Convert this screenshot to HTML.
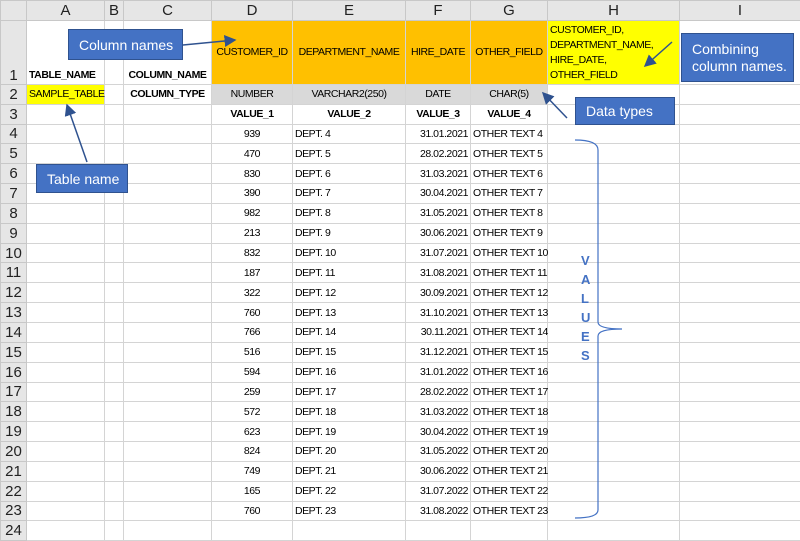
<!DOCTYPE html><html><head><style>
body{margin:0;width:800px;height:528px;overflow:hidden;background:#fff;font-family:"Liberation Sans",Arial,sans-serif;position:relative}
table{border-collapse:collapse;table-layout:fixed;position:absolute;left:0;top:0;width:800px}
td{border:1px solid #d4d4d4;padding:0 2px;font-size:10.5px;white-space:nowrap;overflow:visible;color:#000;letter-spacing:-0.45px}
tr.h td{background:#e6e6e6;text-align:center;font-size:15px;color:#222;border-color:#c8c8c8;letter-spacing:0}
td.r{background:#e6e6e6;text-align:center;font-size:15px;color:#222;border-color:#c8c8c8;padding:0;letter-spacing:0}
tr td{height:18.85px}
.c{text-align:center}.b{font-weight:bold}.o{background:#ffc000;text-align:center;padding:0}.g{background:#d9d9d9;text-align:center}
.rt{text-align:right}
.box{position:absolute;background:#4472c4;border:1px solid #2f528f;color:#fff;font-size:14px;box-sizing:border-box;padding-left:10px;display:flex;align-items:center}
.v{position:absolute;left:581px;color:#4472c4;font-weight:bold;font-size:13px}
</style></head><body>
<table>
<colgroup><col style="width:26px"><col style="width:78px"><col style="width:19px"><col style="width:88px"><col style="width:81px"><col style="width:113px"><col style="width:65px"><col style="width:77px"><col style="width:132px"><col style="width:121px"></colgroup>
<tr class="h"><td style="height:17px"></td><td>A</td><td>B</td><td>C</td><td>D</td><td>E</td><td>F</td><td>G</td><td>H</td><td>I</td></tr>
<tr><td class="r" style="height:63px;vertical-align:bottom">1</td><td class="b" style="vertical-align:bottom;padding-bottom:3px">TABLE_NAME</td><td></td><td class="b c" style="vertical-align:bottom;padding-bottom:3px">COLUMN_NAME</td><td class="o">CUSTOMER_ID</td><td class="o">DEPARTMENT_NAME</td><td class="o">HIRE_DATE</td><td class="o">OTHER_FIELD</td><td style="background:#ffff00;vertical-align:top;padding-top:2px;line-height:15px">CUSTOMER_ID,<br>DEPARTMENT_NAME,<br>HIRE_DATE,<br>OTHER_FIELD</td><td></td></tr>
<tr><td class="r">2</td><td style="background:#ffff00">SAMPLE_TABLE</td><td></td><td class="b c">COLUMN_TYPE</td><td class="g">NUMBER</td><td class="g">VARCHAR2(250)</td><td class="g">DATE</td><td class="g">CHAR(5)</td><td></td><td></td></tr>
<tr><td class="r">3</td><td></td><td></td><td></td><td class="b c">VALUE_1</td><td class="b c">VALUE_2</td><td class="b c">VALUE_3</td><td class="b c">VALUE_4</td><td></td><td></td></tr>
<tr><td class="r">4</td><td></td><td></td><td></td><td class="c">939</td><td>DEPT. 4</td><td class="rt">31.01.2021</td><td>OTHER TEXT 4</td><td></td><td></td></tr>
<tr><td class="r">5</td><td></td><td></td><td></td><td class="c">470</td><td>DEPT. 5</td><td class="rt">28.02.2021</td><td>OTHER TEXT 5</td><td></td><td></td></tr>
<tr><td class="r">6</td><td></td><td></td><td></td><td class="c">830</td><td>DEPT. 6</td><td class="rt">31.03.2021</td><td>OTHER TEXT 6</td><td></td><td></td></tr>
<tr><td class="r">7</td><td></td><td></td><td></td><td class="c">390</td><td>DEPT. 7</td><td class="rt">30.04.2021</td><td>OTHER TEXT 7</td><td></td><td></td></tr>
<tr><td class="r">8</td><td></td><td></td><td></td><td class="c">982</td><td>DEPT. 8</td><td class="rt">31.05.2021</td><td>OTHER TEXT 8</td><td></td><td></td></tr>
<tr><td class="r">9</td><td></td><td></td><td></td><td class="c">213</td><td>DEPT. 9</td><td class="rt">30.06.2021</td><td>OTHER TEXT 9</td><td></td><td></td></tr>
<tr><td class="r">10</td><td></td><td></td><td></td><td class="c">832</td><td>DEPT. 10</td><td class="rt">31.07.2021</td><td>OTHER TEXT 10</td><td></td><td></td></tr>
<tr><td class="r">11</td><td></td><td></td><td></td><td class="c">187</td><td>DEPT. 11</td><td class="rt">31.08.2021</td><td>OTHER TEXT 11</td><td></td><td></td></tr>
<tr><td class="r">12</td><td></td><td></td><td></td><td class="c">322</td><td>DEPT. 12</td><td class="rt">30.09.2021</td><td>OTHER TEXT 12</td><td></td><td></td></tr>
<tr><td class="r">13</td><td></td><td></td><td></td><td class="c">760</td><td>DEPT. 13</td><td class="rt">31.10.2021</td><td>OTHER TEXT 13</td><td></td><td></td></tr>
<tr><td class="r">14</td><td></td><td></td><td></td><td class="c">766</td><td>DEPT. 14</td><td class="rt">30.11.2021</td><td>OTHER TEXT 14</td><td></td><td></td></tr>
<tr><td class="r">15</td><td></td><td></td><td></td><td class="c">516</td><td>DEPT. 15</td><td class="rt">31.12.2021</td><td>OTHER TEXT 15</td><td></td><td></td></tr>
<tr><td class="r">16</td><td></td><td></td><td></td><td class="c">594</td><td>DEPT. 16</td><td class="rt">31.01.2022</td><td>OTHER TEXT 16</td><td></td><td></td></tr>
<tr><td class="r">17</td><td></td><td></td><td></td><td class="c">259</td><td>DEPT. 17</td><td class="rt">28.02.2022</td><td>OTHER TEXT 17</td><td></td><td></td></tr>
<tr><td class="r">18</td><td></td><td></td><td></td><td class="c">572</td><td>DEPT. 18</td><td class="rt">31.03.2022</td><td>OTHER TEXT 18</td><td></td><td></td></tr>
<tr><td class="r">19</td><td></td><td></td><td></td><td class="c">623</td><td>DEPT. 19</td><td class="rt">30.04.2022</td><td>OTHER TEXT 19</td><td></td><td></td></tr>
<tr><td class="r">20</td><td></td><td></td><td></td><td class="c">824</td><td>DEPT. 20</td><td class="rt">31.05.2022</td><td>OTHER TEXT 20</td><td></td><td></td></tr>
<tr><td class="r">21</td><td></td><td></td><td></td><td class="c">749</td><td>DEPT. 21</td><td class="rt">30.06.2022</td><td>OTHER TEXT 21</td><td></td><td></td></tr>
<tr><td class="r">22</td><td></td><td></td><td></td><td class="c">165</td><td>DEPT. 22</td><td class="rt">31.07.2022</td><td>OTHER TEXT 22</td><td></td><td></td></tr>
<tr><td class="r">23</td><td></td><td></td><td></td><td class="c">760</td><td>DEPT. 23</td><td class="rt">31.08.2022</td><td>OTHER TEXT 23</td><td></td><td></td></tr>
<tr><td class="r">24</td><td></td><td></td><td></td><td></td><td></td><td></td><td></td><td></td><td></td></tr>
</table>
<div class="box" style="left:68px;top:29px;width:115px;height:31px">Column names</div>
<div class="box" style="left:36px;top:164px;width:92px;height:29px">Table name</div>
<div class="box" style="left:681px;top:33px;width:113px;height:49px;line-height:17px">Combining<br>column names.</div>
<div class="box" style="left:575px;top:97px;width:100px;height:28px">Data types</div>
<div class="v" style="top:253px">V</div><div class="v" style="top:272px">A</div><div class="v" style="top:291px">L</div><div class="v" style="top:310px">U</div><div class="v" style="top:329px">E</div><div class="v" style="top:348px">S</div>
<svg width="800" height="528" style="position:absolute;left:0;top:0" fill="none">
<defs><marker id="a" markerWidth="8" markerHeight="8" refX="7" refY="4" orient="auto"><path d="M0,0 L8,4 L0,8 z" fill="#2f528f"/></marker></defs>
<g stroke="#2f528f" stroke-width="1.5"><line x1="183" y1="45" x2="235" y2="40" marker-end="url(#a)"/><line x1="87" y1="162" x2="67" y2="105" marker-end="url(#a)"/><line x1="672" y1="42" x2="645" y2="66" marker-end="url(#a)"/><line x1="567" y1="118" x2="543" y2="93" marker-end="url(#a)"/></g>
<path d="M575,140 Q598,140 598,150 L598,322 Q598,329 622,329 Q598,329 598,336 L598,510 Q598,518 575,518" stroke="#4472c4" stroke-width="1.2"/>
</svg>
</body></html>
